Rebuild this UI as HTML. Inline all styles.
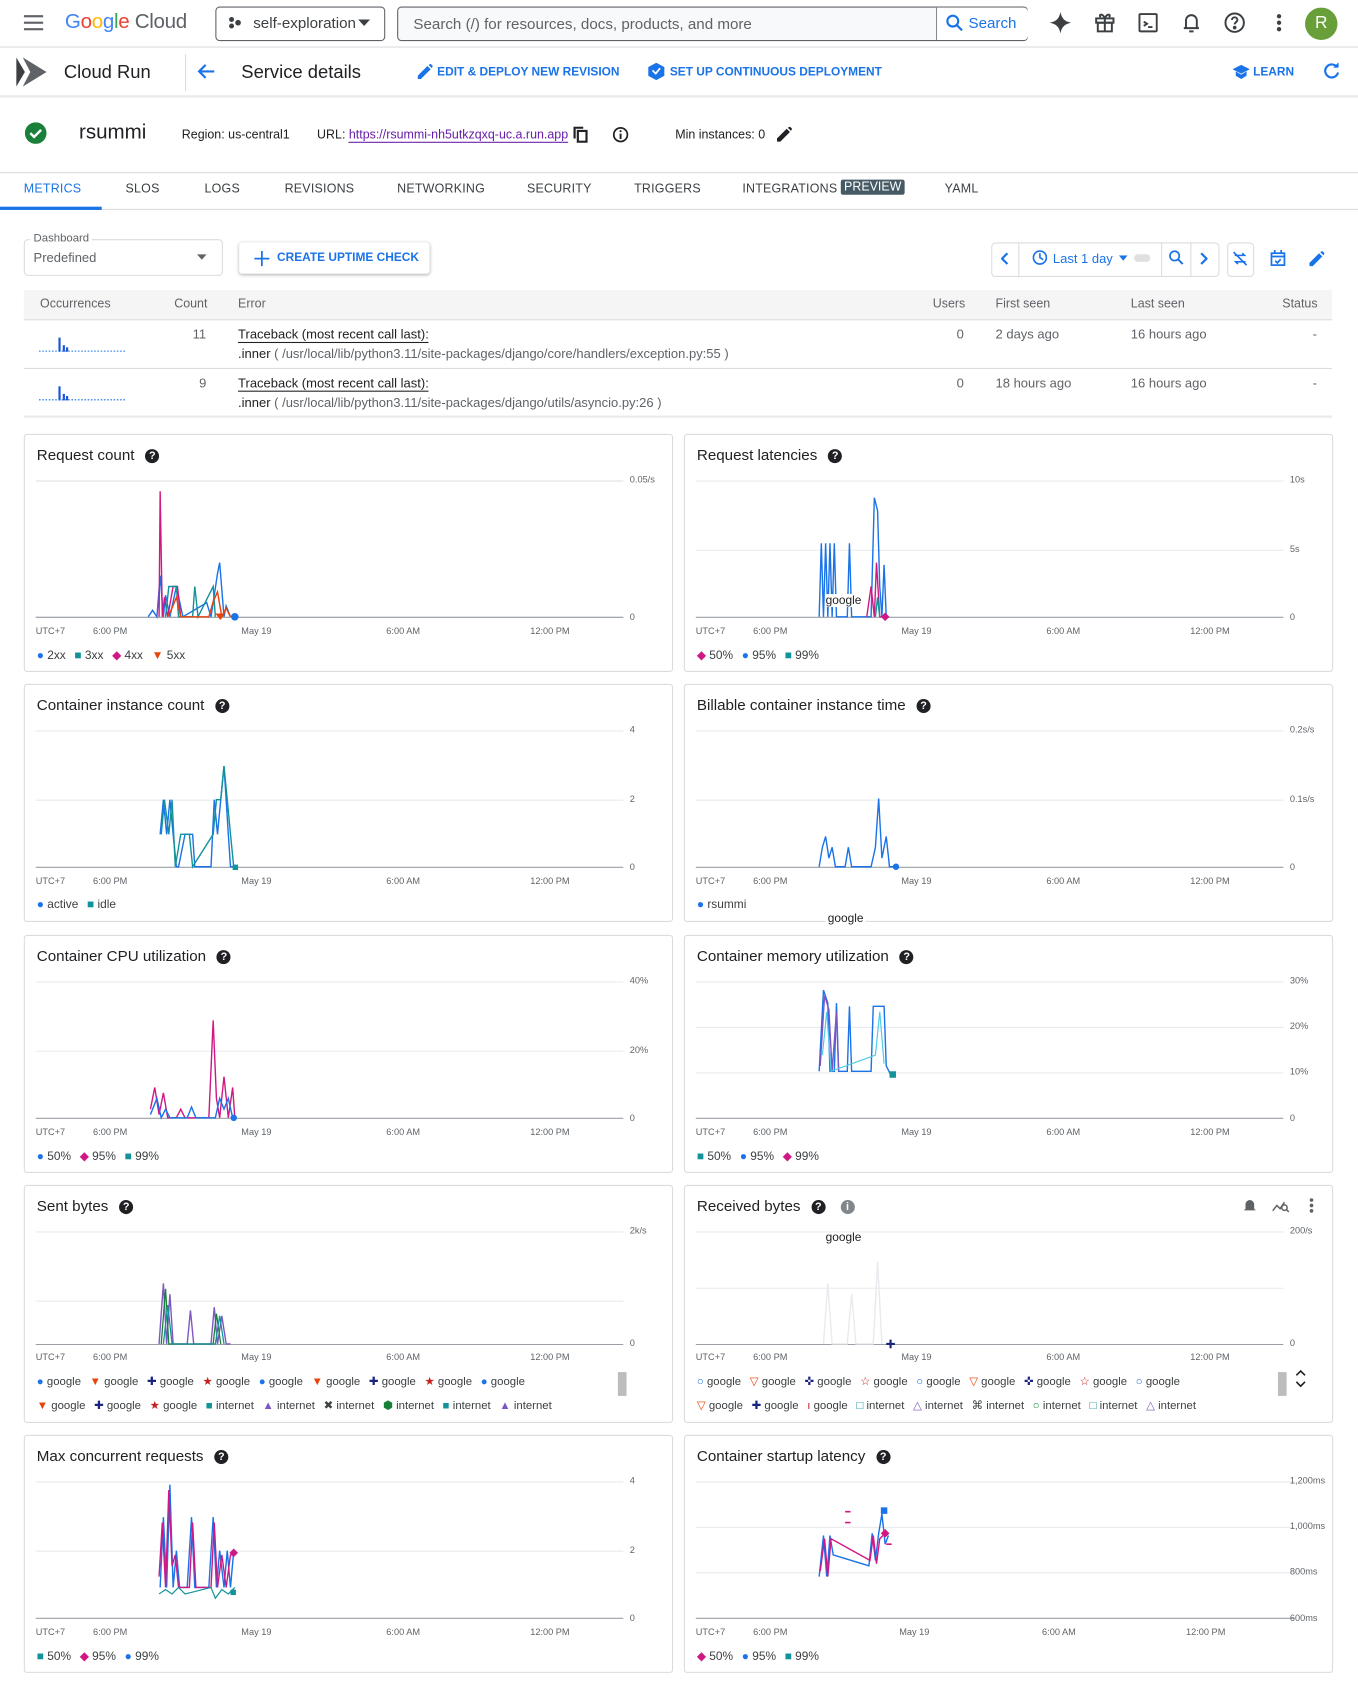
<!DOCTYPE html>
<html><head><meta charset="utf-8">
<style>
html,body{margin:0;padding:0;width:1358px;height:1698px;overflow:hidden;background:#fff}
#w{position:absolute;left:0;top:0;width:1255px;height:1569px;transform:scale(1.0821);transform-origin:0 0;font-family:"Liberation Sans",Arial,sans-serif;color:#202124}
.a{position:absolute;white-space:nowrap}
.blue{color:#1a73e8}
.hl{position:absolute;left:0;width:1255px;height:1px;background:#dadce0}
.tab{position:absolute;top:169px;font-size:11.5px;color:#3c4043;letter-spacing:.2px}
.card{position:absolute;width:598px;height:218px;border:1px solid #dadce0;border-radius:3px;background:#fff}
.card .t{position:absolute;left:11px;top:10px;font-size:14px;color:#202124}
.card svg{position:absolute;left:0;top:0}
.q{display:inline-block;width:13px;height:13px;border-radius:50%;background:#202124;color:#fff;font-size:10px;font-weight:bold;text-align:center;line-height:13px;vertical-align:1px;margin-left:10px}
.yl{position:absolute;left:559px;font-size:8.5px;color:#5f6368}
.xl{position:absolute;top:176px;font-size:8.5px;color:#5f6368}
.lg{position:absolute;left:11px;top:197px;font-size:11px;color:#3c4043}
.lg i{font-style:normal;margin-right:3px}
.lg span{margin-right:8px}
.th{position:absolute;top:275px;font-size:11.5px;color:#5f6368}
.td{position:absolute;font-size:12px;color:#5f6368}
</style></head><body><div id="w">

<!-- top bar -->
<svg class="a" style="left:22px;top:13px" width="18" height="16"><rect y="1" width="18" height="2" fill="#5f6368"/><rect y="7" width="18" height="2" fill="#5f6368"/><rect y="13" width="18" height="2" fill="#5f6368"/></svg>
<div class="a" style="left:60px;top:10px;font-size:19px;letter-spacing:-.3px"><span style="color:#4285f4">G</span><span style="color:#ea4335">o</span><span style="color:#fbbc04">o</span><span style="color:#4285f4">g</span><span style="color:#34a853">l</span><span style="color:#ea4335">e</span><span style="color:#5f6368"> Cloud</span></div>
<div class="a" style="left:199px;top:6px;width:155px;height:30px;border:1px solid #5f6368;border-radius:4px"></div>
<svg class="a" style="left:211px;top:15px" width="14" height="12"><circle cx="3" cy="3" r="2.3" fill="#3c4043"/><circle cx="3" cy="9" r="2.3" fill="#3c4043"/><circle cx="9" cy="6" r="2.6" fill="#3c4043"/></svg>
<div class="a" style="left:234px;top:13px;font-size:14px;color:#3c4043">self-exploration</div>
<svg class="a" style="left:331px;top:18px" width="11" height="6"><path d="M0 0h11L5.5 6z" fill="#3c4043"/></svg>
<div class="a" style="left:367px;top:6px;width:581px;height:30px;border:1px solid #5f6368;border-radius:4px;background:#f8f9fa"></div>
<div class="a" style="left:865px;top:7px;width:84px;height:30px;background:#fff;border-left:1px solid #80868b;border-radius:0 4px 4px 0"></div>
<div class="a" style="left:382px;top:14px;font-size:14px;color:#5f6368">Search (/) for resources, docs, products, and more</div>
<svg class="a" style="left:874px;top:13px" width="16" height="16"><circle cx="6.5" cy="6.5" r="5" fill="none" stroke="#1a73e8" stroke-width="2"/><path d="M10 10l5 5" stroke="#1a73e8" stroke-width="2"/></svg>
<div class="a blue" style="left:895px;top:13px;font-size:14px">Search</div>
<svg class="a" style="left:970px;top:11px" width="20" height="20"><path d="M10 0C11 6 14 9 20 10 14 11 11 14 10 20 9 14 6 11 0 10 6 9 9 6 10 0z" fill="#3c4043"/></svg>
<svg class="a" style="left:1011px;top:11px" width="20" height="20" fill="none" stroke="#3c4043" stroke-width="1.8"><rect x="2" y="6" width="16" height="4"/><rect x="3.5" y="10" width="13" height="8"/><path d="M10 6v12M10 6C8 1 4 2 6 5M10 6c2-5 6-4 4-1"/></svg>
<svg class="a" style="left:1052px;top:12px" width="18" height="18" fill="none" stroke="#3c4043" stroke-width="1.8"><rect x="1" y="1" width="16" height="16" rx="1"/><path d="M5 8l3 2-3 2M9 13h4"/></svg>
<svg class="a" style="left:1092px;top:11px" width="18" height="20" fill="none" stroke="#3c4043" stroke-width="1.8"><path d="M4 15V8a5 5 0 0110 0v7M2 15h14M7 18h4"/></svg>
<svg class="a" style="left:1131px;top:11px" width="20" height="20" fill="none" stroke="#3c4043" stroke-width="1.8"><circle cx="10" cy="10" r="8.5"/><path d="M7.5 7.5a2.5 2.5 0 115 0c0 2-2.5 2-2.5 4"/><circle cx="10" cy="14.5" r=".8" fill="#3c4043"/></svg>
<svg class="a" style="left:1179px;top:12px" width="6" height="18"><circle cx="3" cy="3" r="2" fill="#3c4043"/><circle cx="3" cy="9" r="2" fill="#3c4043"/><circle cx="3" cy="15" r="2" fill="#3c4043"/></svg>
<div class="a" style="left:1206px;top:7px;width:30px;height:30px;border-radius:50%;background:#689f38;color:#fff;font-size:16px;text-align:center;line-height:30px">R</div>
<div class="hl" style="top:43px"></div>

<!-- service bar -->
<svg class="a" style="left:15px;top:53px" width="30" height="27"><path d="M0 0l8 13.5L0 27V0z" fill="#3c4043"/><path d="M6 0l22 13.5L6 27l7-13.5z" fill="#5f6368"/></svg>
<div class="a" style="left:59px;top:57px;font-size:17px">Cloud Run</div>
<div class="a" style="left:171px;top:50px;width:1px;height:34px;background:#dadce0"></div>
<svg class="a" style="left:181px;top:58px" width="18" height="16"><path d="M17 8H3M9 2L3 8l6 6" fill="none" stroke="#1a73e8" stroke-width="2"/></svg>
<div class="a" style="left:223px;top:57px;font-size:17px">Service details</div>
<svg class="a" style="left:386px;top:59px" width="14" height="14"><path d="M0 14v-3L9 2l3 3-9 9zM10 1l2-1 2 2-1 2z" fill="#1a73e8"/></svg>
<div class="a blue" style="left:404px;top:61px;font-size:11px;font-weight:bold">EDIT &amp; DEPLOY NEW REVISION</div>
<svg class="a" style="left:599px;top:58px" width="15" height="16"><path d="M7.5 0L15 4v8l-7.5 4L0 12V4z" fill="#1a73e8"/><path d="M4 7l3 3 4-5" stroke="#fff" stroke-width="1.6" fill="none"/></svg>
<div class="a blue" style="left:619px;top:61px;font-size:11px;font-weight:bold">SET UP CONTINUOUS DEPLOYMENT</div>
<svg class="a" style="left:1139px;top:60px" width="16" height="13"><path d="M8 0l8 4-8 4-8-4zM3 6v4l5 3 5-3V6L8 9z" fill="#1a73e8"/></svg>
<div class="a blue" style="left:1158px;top:61px;font-size:11px;font-weight:bold">LEARN</div>
<svg class="a" style="left:1223px;top:58px" width="15" height="15"><path d="M12.5 4A6 6 0 1013.5 9" fill="none" stroke="#1a73e8" stroke-width="2"/><path d="M9 4.5h5v-5z" fill="#1a73e8"/></svg>
<div class="hl" style="top:88px;height:2px;background:#e8eaed"></div>

<!-- info row -->
<svg class="a" style="left:23px;top:113px" width="20" height="20"><circle cx="10" cy="10" r="10" fill="#188038"/><path d="M5 10l3.5 3.5L15 7" fill="none" stroke="#fff" stroke-width="2.2"/></svg>
<div class="a" style="left:73px;top:112px;font-size:19px">rsummi</div>
<div class="a" style="left:168px;top:119px;font-size:11.5px">Region: us-central1</div>
<div class="a" style="left:293px;top:119px;font-size:11.5px">URL: <span style="color:#681da8;border-bottom:1px solid #681da8">https://rsummi-nh5utkzqxq-uc.a.run.app</span></div>
<svg class="a" style="left:530px;top:117px" width="14" height="15" fill="none" stroke="#202124" stroke-width="2"><rect x="4" y="4" width="8" height="10"/><path d="M1 11V1h8"/></svg>
<svg class="a" style="left:566px;top:117px" width="15" height="15"><circle cx="7.5" cy="7.5" r="6.3" fill="none" stroke="#202124" stroke-width="1.6"/><path d="M7.5 6.5v5" stroke="#202124" stroke-width="1.8"/><circle cx="7.5" cy="4.2" r="1" fill="#202124"/></svg>
<div class="a" style="left:624px;top:119px;font-size:11.5px">Min instances: 0</div>
<svg class="a" style="left:718px;top:117px" width="14" height="14"><path d="M0 14v-3L9 2l3 3-9 9zM10 1l2-1 2 2-1 2z" fill="#202124"/></svg>

<!-- tabs -->
<div class="hl" style="top:159px"></div>
<div class="tab" style="left:22px;color:#1a73e8">METRICS</div>
<div class="tab" style="left:116px">SLOS</div>
<div class="tab" style="left:189px">LOGS</div>
<div class="tab" style="left:263px">REVISIONS</div>
<div class="tab" style="left:367px">NETWORKING</div>
<div class="tab" style="left:487px">SECURITY</div>
<div class="tab" style="left:586px">TRIGGERS</div>
<div class="tab" style="left:686px">INTEGRATIONS</div>
<div class="a" style="left:777px;top:166px;background:#455a64;color:#fff;font-size:11.5px;padding:1px 3px;border-radius:2px">PREVIEW</div>
<div class="tab" style="left:873px">YAML</div>
<div class="hl" style="top:193px"></div>
<div class="a" style="left:0;top:191px;width:94px;height:3px;background:#1a73e8"></div>

<!-- controls -->
<div class="a" style="left:22px;top:221px;width:182px;height:32px;border:1px solid #dadce0;border-radius:4px"></div>
<div class="a" style="left:28px;top:214px;font-size:10.5px;color:#5f6368;background:#fff;padding:0 3px">Dashboard</div>
<div class="a" style="left:31px;top:231px;font-size:12px;color:#5f6368">Predefined</div>
<svg class="a" style="left:182px;top:235px" width="9" height="5"><path d="M0 0h9L4.5 5z" fill="#5f6368"/></svg>
<div class="a" style="left:221px;top:224px;width:176px;height:29px;border-radius:3px;box-shadow:0 1px 3px rgba(0,0,0,.3)"></div>
<svg class="a" style="left:235px;top:232px" width="14" height="14"><path d="M7 0v14M0 7h14" stroke="#1a73e8" stroke-width="1.6"/></svg>
<div class="a blue" style="left:256px;top:232px;font-size:11px;font-weight:bold">CREATE UPTIME CHECK</div>

<div class="a" style="left:916px;top:224px;width:209px;height:30px;border:1px solid #dadce0;border-radius:4px"></div>
<div class="a" style="left:941px;top:224px;width:1px;height:31px;background:#dadce0"></div>
<div class="a" style="left:1073px;top:224px;width:1px;height:31px;background:#dadce0"></div>
<div class="a" style="left:1100px;top:224px;width:1px;height:31px;background:#dadce0"></div>
<svg class="a" style="left:925px;top:233px" width="8" height="12"><path d="M6 1L1 6l5 5" fill="none" stroke="#1a73e8" stroke-width="2"/></svg>
<svg class="a" style="left:954px;top:231px" width="14" height="14"><circle cx="7" cy="7" r="6" fill="none" stroke="#1a73e8" stroke-width="1.5"/><path d="M7 3v4l3 2" fill="none" stroke="#1a73e8" stroke-width="1.5"/></svg>
<div class="a blue" style="left:973px;top:232px;font-size:12px">Last 1 day</div>
<svg class="a" style="left:1034px;top:236px" width="8" height="5"><path d="M0 0h8L4 5z" fill="#1a73e8"/></svg>
<div class="a" style="left:1048px;top:235px;width:15px;height:7px;border-radius:4px;background:#e0e0e0"></div>
<svg class="a" style="left:1080px;top:231px" width="14" height="14"><circle cx="5.5" cy="5.5" r="4.3" fill="none" stroke="#1a73e8" stroke-width="1.6"/><path d="M8.5 8.5l4.5 4.5" stroke="#1a73e8" stroke-width="1.8"/></svg>
<svg class="a" style="left:1108px;top:233px" width="8" height="12"><path d="M2 1l5 5-5 5" fill="none" stroke="#1a73e8" stroke-width="2"/></svg>
<div class="a" style="left:1134px;top:224px;width:23px;height:30px;border:1px solid #dadce0;border-radius:4px"></div>
<svg class="a" style="left:1139px;top:232px" width="14" height="14" fill="none" stroke="#1a73e8" stroke-width="1.5"><path d="M2 4h9l-2-2M12 10H3l2 2M1 1l12 12"/></svg>
<svg class="a" style="left:1174px;top:231px" width="14" height="15" fill="none" stroke="#1a73e8" stroke-width="1.6"><rect x="1" y="3" width="12" height="11"/><path d="M1 6h12M4 0v3M10 0v3M4.5 10l2 2 3-3.5"/></svg>
<svg class="a" style="left:1210px;top:232px" width="14" height="14"><path d="M0 14v-3L9 2l3 3-9 9zM10 1l2-1 2 2-1 2z" fill="#1a73e8"/></svg>

<!-- table -->
<div class="a" style="left:22px;top:268px;width:1209px;height:27px;background:#f5f5f5;border-bottom:1px solid #dadce0"></div>
<div class="th" style="left:37px">Occurrences</div>
<div class="th" style="left:161px">Count</div>
<div class="th" style="left:220px">Error</div>
<div class="th" style="left:862px">Users</div>
<div class="th" style="left:920px">First seen</div>
<div class="th" style="left:1045px">Last seen</div>
<div class="th" style="left:1185px">Status</div>
<div class="a" style="left:22px;top:340px;width:1209px;height:1px;background:#dadce0"></div>
<div class="a" style="left:22px;top:384px;width:1209px;height:2px;background:#e8eaed"></div>
<svg class="a" style="left:36px;top:310px" width="80" height="16"><path d="M0 14.5h80" stroke="#1a73e8" stroke-width="1" stroke-dasharray="1.5 1.5"/><rect x="18" y="2" width="2" height="13" fill="#1a56db"/><rect x="22" y="9" width="2" height="6" fill="#1a56db"/><rect x="25" y="11" width="2" height="4" fill="#1a56db"/></svg>
<svg class="a" style="left:36px;top:355px" width="80" height="16"><path d="M0 14.5h80" stroke="#1a73e8" stroke-width="1" stroke-dasharray="1.5 1.5"/><rect x="18" y="2" width="2" height="13" fill="#1a56db"/><rect x="22" y="9" width="2" height="6" fill="#1a56db"/><rect x="25" y="11" width="2" height="4" fill="#1a56db"/></svg>
<div class="td" style="left:178px;top:302px">11</div>
<div class="td" style="left:184px;top:347px">9</div>
<div class="td" style="left:220px;top:302px;color:#202124;border-bottom:1px solid #202124">Traceback (most recent call last):</div>
<div class="td" style="left:220px;top:320px;color:#202124">.inner <span style="color:#5f6368">( /usr/local/lib/python3.11/site-packages/django/core/handlers/exception.py:55 )</span></div>
<div class="td" style="left:220px;top:347px;color:#202124;border-bottom:1px solid #202124">Traceback (most recent call last):</div>
<div class="td" style="left:220px;top:365px;color:#202124">.inner <span style="color:#5f6368">( /usr/local/lib/python3.11/site-packages/django/utils/asyncio.py:26 )</span></div>
<div class="td" style="left:884px;top:302px">0</div><div class="td" style="left:920px;top:302px">2 days ago</div><div class="td" style="left:1045px;top:302px">16 hours ago</div><div class="td" style="left:1213px;top:302px">-</div>
<div class="td" style="left:884px;top:347px">0</div><div class="td" style="left:920px;top:347px">18 hours ago</div><div class="td" style="left:1045px;top:347px">16 hours ago</div><div class="td" style="left:1213px;top:347px">-</div>

<!-- CARDS -->
<div class="card" style="left:22px;top:401px">
<div class="t">Request count<span class="q">?</span></div>
<svg width="598" height="218"><path d="M10 42.5H553M10 168.5H553" stroke="#dadce0"/><path d="M10 168.5H553" stroke="#9aa0a6"/>
<polyline points="114,168 118,162 122,168 125,130 128,168 130,148 134,168 140,140 146,168 168,155 172,168 178,128 180,118 184,168 186,158 190,168" fill="none" stroke="#1a73e8" stroke-width="1.3"/>
<polyline points="124,168 125,52 127,168 129,150 132,168 137,140 141,140 144,168" fill="none" stroke="#d01884" stroke-width="1.3"/>
<polyline points="130,168 133,140 140,140 142,168 155,168 157,140 160,168 174,140 176,168" fill="none" stroke="#12939a" stroke-width="1.3"/>
<polyline points="132,168 136,160 140,150 144,168 170,168 174,154 178,145 182,168 186,160 190,168" fill="none" stroke="#e8430a" stroke-width="1.3"/>
<path d="M176 165h9l-4.5 6z" fill="#e8430a"/><circle cx="194" cy="168" r="3.5" fill="#1a73e8"/></svg>
<div class="yl" style="top:36px">0.05/s</div><div class="yl" style="top:163px">0</div>
<div class="xl" style="left:10px">UTC+7</div><div class="xl" style="left:63px">6:00 PM</div><div class="xl" style="left:200px">May 19</div><div class="xl" style="left:334px">6:00 AM</div><div class="xl" style="left:467px">12:00 PM</div>
<div class="lg"><span><i style="color:#1a73e8">●</i>2xx</span><span><i style="color:#12939a">■</i>3xx</span><span><i style="color:#d01884">◆</i>4xx</span><span><i style="color:#e8430a">▼</i>5xx</span></div>
</div>

<div class="card" style="left:632px;top:401px">
<div class="t">Request latencies<span class="q">?</span></div>
<svg width="598" height="218"><path d="M10 42.5H553M10 106.5H553" stroke="#e8eaed"/><path d="M10 168.5H553" stroke="#9aa0a6"/>
<polyline points="124,168 126,100 128,168 130,100 132,168 134,100 136,168 138,100 140,168 150,168 152,100 154,168 172,168 175,58 178,70 180,140 182,168 184,120 186,168" fill="none" stroke="#1a73e8" stroke-width="1.3"/>
<polyline points="168,168 172,140 175,168 177,118 180,168 184,168" fill="none" stroke="#d01884" stroke-width="1.3"/>
<polyline points="176,168 178,150 180,168" fill="none" stroke="#12939a" stroke-width="1.3"/>
<path d="M185 164l4 4-4 4-4-4z" fill="#d01884"/></svg>
<div class="a" style="left:130px;top:147px;font-size:11px;background:#fff">google</div>
<div class="yl" style="top:36px">10s</div><div class="yl" style="top:100px">5s</div><div class="yl" style="top:163px">0</div>
<div class="xl" style="left:10px">UTC+7</div><div class="xl" style="left:63px">6:00 PM</div><div class="xl" style="left:200px">May 19</div><div class="xl" style="left:334px">6:00 AM</div><div class="xl" style="left:467px">12:00 PM</div>
<div class="lg"><span><i style="color:#d01884">◆</i>50%</span><span><i style="color:#1a73e8">●</i>95%</span><span><i style="color:#12939a">■</i>99%</span></div>
</div>

<div class="card" style="left:22px;top:632px">
<div class="t">Container instance count<span class="q">?</span></div>
<svg width="598" height="218"><path d="M10 42.5H553M10 106.5H553" stroke="#e8eaed"/><path d="M10 168.5H553" stroke="#9aa0a6"/>
<polyline points="125,138 128,106 131,138 134,106 137,138 140,168 142,168 148,138 155,138 157,168 172,168 175,106 178,138 181,106 184,75 186,106 188,138 190,168 194,168" fill="none" stroke="#1a73e8" stroke-width="1.3"/>
<polyline points="126,138 129,106 133,138 136,106 139,168 144,138 152,138 155,168 174,138 177,106 181,106 184,75 187,106 190,138 193,168" fill="none" stroke="#12939a" stroke-width="1.3"/>
<rect x="192" y="166" width="5" height="5" fill="#12939a"/></svg>
<div class="yl" style="top:36px">4</div><div class="yl" style="top:100px">2</div><div class="yl" style="top:163px">0</div>
<div class="xl" style="left:10px">UTC+7</div><div class="xl" style="left:63px">6:00 PM</div><div class="xl" style="left:200px">May 19</div><div class="xl" style="left:334px">6:00 AM</div><div class="xl" style="left:467px">12:00 PM</div>
<div class="lg"><span><i style="color:#1a73e8">●</i>active</span><span><i style="color:#12939a">■</i>idle</span></div>
</div>

<div class="card" style="left:632px;top:632px">
<div class="t">Billable container instance time<span class="q">?</span></div>
<svg width="598" height="218"><path d="M10 42.5H553M10 106.5H553" stroke="#e8eaed"/><path d="M10 168.5H553" stroke="#9aa0a6"/>
<polyline points="124,168 127,150 130,140 133,160 136,150 139,168 148,168 151,150 154,168 172,168 176,150 179,105 182,160 186,140 189,168 195,168" fill="none" stroke="#1a73e8" stroke-width="1.3"/>
<circle cx="195" cy="168" r="3" fill="#1a73e8"/></svg>
<div class="yl" style="top:36px">0.2s/s</div><div class="yl" style="top:100px">0.1s/s</div><div class="yl" style="top:163px">0</div>
<div class="xl" style="left:10px">UTC+7</div><div class="xl" style="left:63px">6:00 PM</div><div class="xl" style="left:200px">May 19</div><div class="xl" style="left:334px">6:00 AM</div><div class="xl" style="left:467px">12:00 PM</div>
<div class="lg"><span><i style="color:#1a73e8">●</i>rsummi</span></div>
<div class="a" style="left:130px;top:210px;font-size:11px;background:#fff;padding:0 2px">google</div>
</div>

<div class="card" style="left:22px;top:864px">
<div class="t">Container CPU utilization<span class="q">?</span></div>
<svg width="598" height="218"><path d="M10 42.5H553M10 106.5H553" stroke="#e8eaed"/><path d="M10 168.5H553" stroke="#9aa0a6"/>
<polyline points="116,160 120,140 124,165 128,145 132,168 140,168 144,160 148,168 170,168 174,78 177,150 180,168 184,130 188,168 192,140 194,168" fill="none" stroke="#d01884" stroke-width="1.3"/>
<polyline points="116,165 122,150 126,168 130,160 134,168 150,168 154,158 158,168 176,168 180,150 184,160 188,150 192,168" fill="none" stroke="#1a73e8" stroke-width="1.3"/>
<circle cx="193" cy="168" r="3" fill="#1a73e8"/></svg>
<div class="yl" style="top:36px">40%</div><div class="yl" style="top:100px">20%</div><div class="yl" style="top:163px">0</div>
<div class="xl" style="left:10px">UTC+7</div><div class="xl" style="left:63px">6:00 PM</div><div class="xl" style="left:200px">May 19</div><div class="xl" style="left:334px">6:00 AM</div><div class="xl" style="left:467px">12:00 PM</div>
<div class="lg"><span><i style="color:#1a73e8">●</i>50%</span><span><i style="color:#d01884">◆</i>95%</span><span><i style="color:#12939a">■</i>99%</span></div>
</div>

<div class="card" style="left:632px;top:864px">
<div class="t">Container memory utilization<span class="q">?</span></div>
<svg width="598" height="218"><path d="M10 42.5H553M10 84.5H553M10 126.5H553" stroke="#e8eaed"/><path d="M10 168.5H553" stroke="#9aa0a6"/>
<polyline points="124,125 128,50 132,62 134,125 138,125 140,62 142,125 150,125 152,65 154,125 172,125 174,65 184,65 186,120 190,128" fill="none" stroke="#1a73e8" stroke-width="1.3"/>
<polyline points="125,120 129,55 133,68 136,125 140,70 142,125" fill="none" stroke="#7e57c2" stroke-width="1.3"/>
<polyline points="127,110 131,70 135,125 176,110 180,70 184,118" fill="none" stroke="#4ecde6" stroke-width="1.1"/>
<rect x="189" y="125" width="6" height="6" fill="#12939a"/></svg>
<div class="yl" style="top:36px">30%</div><div class="yl" style="top:78px">20%</div><div class="yl" style="top:120px">10%</div><div class="yl" style="top:163px">0</div>
<div class="xl" style="left:10px">UTC+7</div><div class="xl" style="left:63px">6:00 PM</div><div class="xl" style="left:200px">May 19</div><div class="xl" style="left:334px">6:00 AM</div><div class="xl" style="left:467px">12:00 PM</div>
<div class="lg"><span><i style="color:#12939a">■</i>50%</span><span><i style="color:#1a73e8">●</i>95%</span><span><i style="color:#d01884">◆</i>99%</span></div>
</div>

<div class="card" style="left:22px;top:1095px">
<div class="t">Sent bytes<span class="q">?</span></div>
<svg width="598" height="218"><path d="M10 42.5H553M10 106.5H553" stroke="#e8eaed"/><path d="M10 146.5H553" stroke="#9aa0a6"/>
<polyline points="124,146 128,90 131,146 134,100 137,146 150,146 153,115 156,146 172,146 175,112 178,146 182,120 186,146 190,146" fill="none" stroke="#7e57c2" stroke-width="1.3"/>
<polyline points="126,146 130,95 133,146 174,146 177,118 181,146" fill="none" stroke="#188038" stroke-width="1.2"/>
<polyline points="128,146 132,110 136,146 176,146 180,120 184,146" fill="none" stroke="#12939a" stroke-width="1.2"/></svg>
<div class="yl" style="top:36px">2k/s</div><div class="yl" style="top:140px">0</div>
<div class="xl" style="left:10px;top:153px">UTC+7</div><div class="xl" style="left:63px;top:153px">6:00 PM</div><div class="xl" style="left:200px;top:153px">May 19</div><div class="xl" style="left:334px;top:153px">6:00 AM</div><div class="xl" style="left:467px;top:153px">12:00 PM</div>
<div class="lg" style="top:175px;font-size:10.5px"><span><i style="color:#1a73e8">●</i>google</span><span><i style="color:#e8430a">▼</i>google</span><span><i style="color:#1a237e">✚</i>google</span><span><i style="color:#c5221f">★</i>google</span><span><i style="color:#1a73e8">●</i>google</span><span><i style="color:#e8430a">▼</i>google</span><span><i style="color:#1a237e">✚</i>google</span><span><i style="color:#c5221f">★</i>google</span><span><i style="color:#1a73e8">●</i>google</span></div>
<div class="lg" style="top:197px;font-size:10.5px"><span><i style="color:#e8430a">▼</i>google</span><span><i style="color:#1a237e">✚</i>google</span><span><i style="color:#c5221f">★</i>google</span><span><i style="color:#12939a">■</i>internet</span><span><i style="color:#7e57c2">▲</i>internet</span><span><i style="color:#3c4043">✖</i>internet</span><span><i style="color:#188038">⬢</i>internet</span><span><i style="color:#12939a">■</i>internet</span><span><i style="color:#7e57c2">▲</i>internet</span></div>
<div class="a" style="left:548px;top:172px;width:8px;height:22px;background:#bdbdbd"></div>
</div>

<div class="card" style="left:632px;top:1095px">
<div class="t">Received bytes<span class="q">?</span><span class="q" style="background:#80868b;margin-left:14px">i</span></div>
<svg class="a" style="left:515px;top:11px" width="14" height="14"><path d="M3 10V6a4 4 0 018 0v4l1.5 1.5h-11zM5.5 12.5h3" fill="#5f6368"/></svg>
<svg class="a" style="left:543px;top:11px" width="16" height="14" fill="none" stroke="#5f6368" stroke-width="1.4"><path d="M0 12l4-5 3 3 4-6"/><circle cx="11" cy="9" r="2.5"/><path d="M13 11l2 2"/></svg>
<svg class="a" style="left:576px;top:10px" width="6" height="16"><circle cx="3" cy="3" r="1.7" fill="#5f6368"/><circle cx="3" cy="8" r="1.7" fill="#5f6368"/><circle cx="3" cy="13" r="1.7" fill="#5f6368"/></svg>
<svg width="598" height="218"><path d="M10 42.5H553M10 94.5H553" stroke="#e8eaed"/><path d="M10 146.5H553" stroke="#9aa0a6"/>
<polyline points="128,146 132,90 136,146 150,146 154,100 158,146 174,146 178,70 182,146" fill="none" stroke="#e8eaed" stroke-width="1.3"/>
<path d="M190 142v8M186 146h8" stroke="#1a237e" stroke-width="2"/></svg>
<div class="a" style="left:130px;top:42px;font-size:11px">google</div>
<div class="yl" style="top:36px">200/s</div><div class="yl" style="top:140px">0</div>
<div class="xl" style="left:10px;top:153px">UTC+7</div><div class="xl" style="left:63px;top:153px">6:00 PM</div><div class="xl" style="left:200px;top:153px">May 19</div><div class="xl" style="left:334px;top:153px">6:00 AM</div><div class="xl" style="left:467px;top:153px">12:00 PM</div>
<div class="lg" style="top:175px;font-size:10.5px"><span><i style="color:#1a73e8">○</i>google</span><span><i style="color:#e8430a">▽</i>google</span><span><i style="color:#1a237e">✜</i>google</span><span><i style="color:#c5221f">☆</i>google</span><span><i style="color:#1a73e8">○</i>google</span><span><i style="color:#e8430a">▽</i>google</span><span><i style="color:#1a237e">✜</i>google</span><span><i style="color:#c5221f">☆</i>google</span><span><i style="color:#1a73e8">○</i>google</span></div>
<div class="lg" style="top:197px;font-size:10.5px"><span><i style="color:#e8430a">▽</i>google</span><span><i style="color:#1a237e">✚</i>google</span><span><i style="color:#c5221f">ı</i>google</span><span><i style="color:#12939a">□</i>internet</span><span><i style="color:#7e57c2">△</i>internet</span><span><i style="color:#3c4043">⌘</i>internet</span><span><i style="color:#188038">○</i>internet</span><span><i style="color:#12939a">□</i>internet</span><span><i style="color:#7e57c2">△</i>internet</span></div>
<div class="a" style="left:548px;top:172px;width:8px;height:22px;background:#bdbdbd"></div>
<svg class="a" style="left:564px;top:170px" width="10" height="16"><path d="M1 5l4-4 4 4M1 11l4 4 4-4" fill="none" stroke="#202124" stroke-width="1.5"/></svg>
</div>

<div class="card" style="left:22px;top:1326px">
<div class="t">Max concurrent requests<span class="q">?</span></div>
<svg width="598" height="218"><path d="M10 42.5H553M10 106.5H553" stroke="#e8eaed"/><path d="M10 168.5H553" stroke="#9aa0a6"/>
<polyline points="125,140 128,75 131,140 134,45 137,140 140,106 143,140 150,140 154,75 157,140 170,140 174,75 177,140 180,106 184,140 187,106 190,140 193,106" fill="none" stroke="#1a73e8" stroke-width="1.3"/>
<polyline points="124,130 127,80 130,140 133,50 136,120 139,110 142,140 152,140 155,80 158,140 172,140 175,80 178,140 182,110 186,140 190,110 193,110" fill="none" stroke="#d01884" stroke-width="1.3"/>
<polyline points="124,146 130,142 136,146 142,140 148,146 156,144 172,140 176,150 182,142 188,146 194,140" fill="none" stroke="#12939a" stroke-width="1.1"/>
<path d="M193 104l4 4-4 4-4-4z" fill="#d01884"/><rect x="190" y="142" width="5" height="5" fill="#12939a"/></svg>
<div class="yl" style="top:36px">4</div><div class="yl" style="top:100px">2</div><div class="yl" style="top:163px">0</div>
<div class="xl" style="left:10px">UTC+7</div><div class="xl" style="left:63px">6:00 PM</div><div class="xl" style="left:200px">May 19</div><div class="xl" style="left:334px">6:00 AM</div><div class="xl" style="left:467px">12:00 PM</div>
<div class="lg"><span><i style="color:#12939a">■</i>50%</span><span><i style="color:#d01884">◆</i>95%</span><span><i style="color:#1a73e8">●</i>99%</span></div>
</div>

<div class="card" style="left:632px;top:1326px">
<div class="t">Container startup latency<span class="q">?</span></div>
<svg width="598" height="218"><path d="M10 42.5H563M10 84.5H563M10 126.5H563" stroke="#e8eaed"/><path d="M10 168.5H563" stroke="#9aa0a6"/>
<polyline points="124,130 128,92 131,130 134,92 137,110 170,120 173,90 176,115 179,90 182,72 185,100 188,92" fill="none" stroke="#1a73e8" stroke-width="1.3"/>
<polyline points="125,125 129,95 132,130 135,95 171,115 174,92 177,118 180,95 183,92" fill="none" stroke="#d01884" stroke-width="1.3"/>
<path d="M148 70h5M148 80h5M186 100h5" stroke="#d01884" stroke-width="1.5"/>
<path d="M185 86l4 4-4 4-4-4z" fill="#d01884"/><rect x="181" y="66" width="6" height="6" fill="#1a73e8"/></svg>
<div class="yl" style="top:36px">1,200ms</div><div class="yl" style="top:78px">1,000ms</div><div class="yl" style="top:120px">800ms</div><div class="yl" style="top:163px">600ms</div>
<div class="xl" style="left:10px">UTC+7</div><div class="xl" style="left:63px">6:00 PM</div><div class="xl" style="left:198px">May 19</div><div class="xl" style="left:330px">6:00 AM</div><div class="xl" style="left:463px">12:00 PM</div>
<div class="lg"><span><i style="color:#d01884">◆</i>50%</span><span><i style="color:#1a73e8">●</i>95%</span><span><i style="color:#12939a">■</i>99%</span></div>
</div>

</div></body></html>
